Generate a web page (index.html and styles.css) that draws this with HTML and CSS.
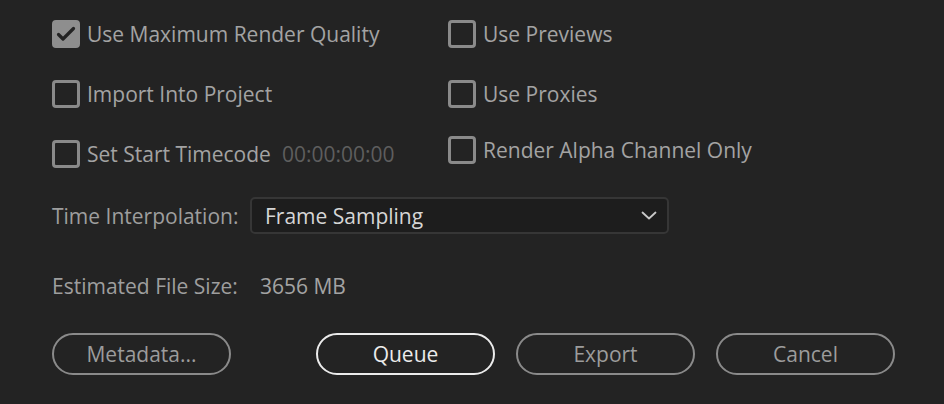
FILE: index.html
```html
<!DOCTYPE html>
<html>
<head>
<meta charset="utf-8">
<link rel="stylesheet" href="styles.css">
</head>
<body>
<div class="panel">
  <div class="options">
    <label class="opt">
      <span class="box checked"><svg viewBox="0 0 28 28" width="28" height="28"><path d="M6.5 14.5 L11 19 L21.5 8.5" fill="none" stroke="#232323" stroke-width="3.2" stroke-linecap="round" stroke-linejoin="round"/></svg></span>
      <span class="txt">Use Maximum Render Quality</span>
    </label>
    <label class="opt">
      <span class="box"></span>
      <span class="txt">Use Previews</span>
    </label>
    <label class="opt">
      <span class="box"></span>
      <span class="txt">Import Into Project</span>
    </label>
    <label class="opt">
      <span class="box"></span>
      <span class="txt">Use Proxies</span>
    </label>
    <label class="opt">
      <span class="box"></span>
      <span class="txt">Set Start Timecode</span>
      <span class="timecode">00:00:00:00</span>
    </label>
    <label class="opt raised">
      <span class="box"></span>
      <span class="txt">Render Alpha Channel Only</span>
    </label>
  </div>

  <div class="field interp">
    <span class="label interp-label">Time Interpolation:</span>
    <div class="select">
      <span class="select-value">Frame Sampling</span>
      <svg class="chev" viewBox="0 0 16 9" width="16" height="9"><path d="M1.5 1.5 L8 7.5 L14.5 1.5" fill="none" stroke="#c8c8c8" stroke-width="1.8" stroke-linecap="round" stroke-linejoin="round"/></svg>
    </div>
  </div>

  <div class="field size">
    <span class="label size-label">Estimated File Size:</span>
    <span class="size-value">3656 MB</span>
  </div>

  <div class="buttons">
    <button class="btn">Metadata...</button>
    <div class="btn-group">
      <button class="btn primary">Queue</button>
      <button class="btn">Export</button>
      <button class="btn">Cancel</button>
    </div>
  </div>
</div>
</body>
</html>
```

FILE: styles.css
```css
html, body {
  margin: 0;
  padding: 0;
  background: #232323;
}
body {
  width: 944px;
  height: 404px;
  overflow: hidden;
  font-family: "Open Sans", "Noto Sans", sans-serif;
  color: #a3a3a3;
}
.panel {
  padding: 20px 0 0 52px;
}
.options {
  display: grid;
  grid-template-columns: 396px auto;
  grid-auto-rows: 28px;
  row-gap: 32px;
}
.opt {
  display: flex;
  align-items: center;
  height: 28px;
  font-size: 21px;
  white-space: nowrap;
}
.opt.raised {
  margin-top: -4px;
}
.box {
  width: 28px;
  height: 28px;
  box-sizing: border-box;
  border: 3px solid #8a8a8a;
  border-radius: 4px;
  flex: none;
  margin-right: 7px;
  display: flex;
}
.box.checked {
  background: #8e8e8e;
  border-color: #8e8e8e;
}
.box svg {
  margin: -3px;
}
.timecode {
  margin-left: 11px;
  font-size: 21px;
  color: #5e5e5e;
}
.field {
  display: flex;
  align-items: center;
  font-size: 21px;
}
.interp {
  margin-top: 29px;
  height: 37px;
}
.label {
  flex: none;
  color: #9e9e9e;
}
.interp-label {
  width: 198px;
}
.select {
  width: 419px;
  height: 37px;
  box-sizing: border-box;
  background: #1d1d1d;
  border: 2px solid #363636;
  border-radius: 5px;
  display: flex;
  align-items: center;
  justify-content: space-between;
  padding: 0 10px 0 13px;
  color: #d6d6d6;
}
.chev {
  display: block;
}
.size {
  margin-top: 37px;
  height: 30px;
}
.size-label {
  width: 208px;
}
.size-value {
  color: #a3a3a3;
}
.buttons {
  display: flex;
  margin-top: 32px;
  gap: 85px;
}
.btn-group {
  display: flex;
  gap: 21px;
}
.btn {
  width: 179px;
  height: 42px;
  box-sizing: border-box;
  border: 2px solid #8a8a8a;
  border-radius: 21px;
  background: transparent;
  color: #9c9c9c;
  font-family: "Open Sans", "Noto Sans", sans-serif;
  font-size: 21px;
  padding: 0;
  display: flex;
  align-items: center;
  justify-content: center;
}
.btn.primary {
  border-color: #ebebeb;
  color: #ebebeb;
}
```
